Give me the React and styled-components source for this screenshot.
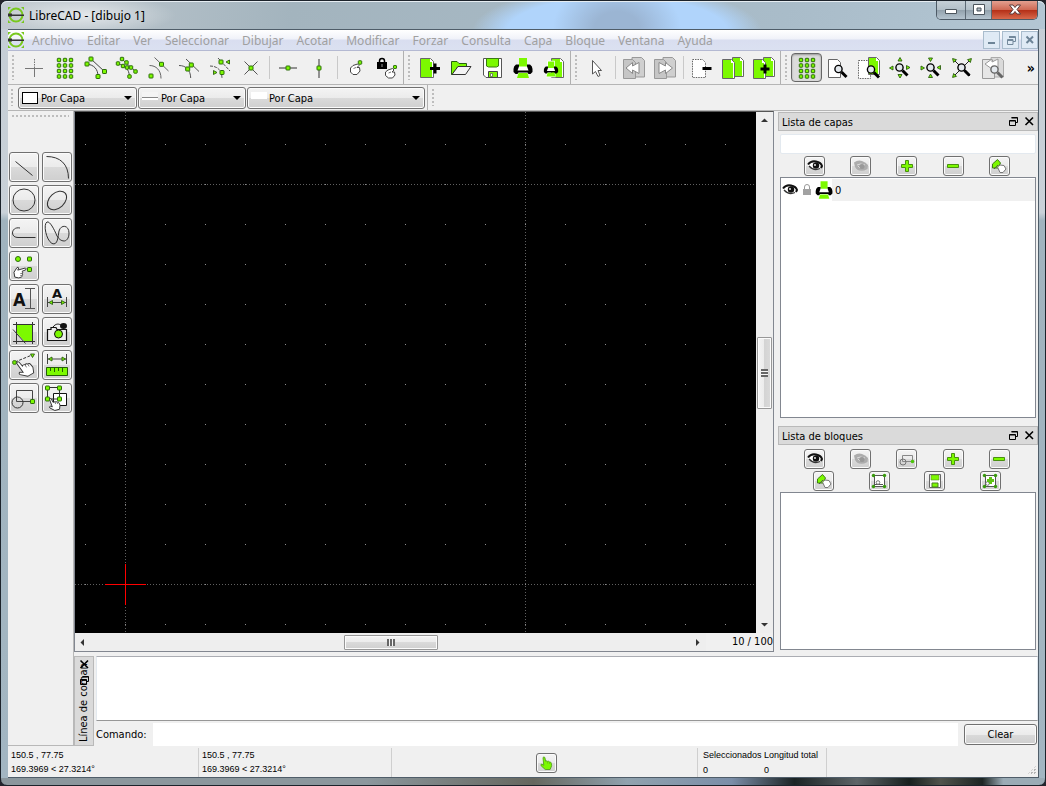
import React from "react";
import styled, { createGlobalStyle, css } from "styled-components";

const GREEN = "#7cf900";
const UI_FONT = `"DejaVu Sans Condensed", "Noto Sans", sans-serif`;

const MENUS = [
  "Archivo",
  "Editar",
  "Ver",
  "Seleccionar",
  "Dibujar",
  "Acotar",
  "Modificar",
  "Forzar",
  "Consulta",
  "Capa",
  "Bloque",
  "Ventana",
  "Ayuda",
];

const TOOLBARS = [
  [
    ["free", "Libre"],
    ["grid", "Rejilla"],
    ["endpoint", "Puntos finales"],
    ["onEntity", "Punto en entidad"],
    ["center", "Centro"],
    ["middle", "Medio"],
    ["distance", "Distancia"],
    ["intersection", "Intersección"],
    null,
    ["horizontal", "Restringir horizontal"],
    ["vertical", "Restringir vertical"],
    null,
    ["relZero", "Mover cero relativo"],
    ["lockZero", "Bloquear cero relativo"],
  ],
  [
    ["newDoc", "Nuevo"],
    ["open", "Abrir"],
    ["save", "Guardar"],
    ["print", "Imprimir"],
    ["preview", "Vista preliminar"],
  ],
  [
    ["cursor", "Seleccionar"],
    null,
    ["undo", "Deshacer"],
    ["redo", "Rehacer"],
    null,
    ["cut", "Cortar"],
    ["copy", "Copiar"],
    ["paste", "Pegar"],
  ],
  [
    ["grid", "Rejilla visible", true],
    ["zoomWindow", "Ventana de zoom"],
    ["zoomPan", "Zoom a página"],
    ["zoomIn", "Acercar"],
    ["zoomOut", "Alejar"],
    ["zoomAuto", "Zoom automático"],
    ["zoomPrev", "Zoom previo"],
  ],
];

const SIDE_TOOLS = [
  ["line", "Líneas"],
  ["arc", "Arcos"],
  ["circle", "Círculos"],
  ["ellipse", "Elipses"],
  ["polyline", "Polilíneas"],
  ["spline", "Splines"],
  ["points", "Puntos"],
  null,
  ["text", "Texto"],
  ["dimension", "Acotar"],
  ["hatch", "Sombreado"],
  ["camera", "Insertar imagen"],
  ["modify", "Modificar"],
  ["measure", "Medir"],
  ["block", "Bloque"],
  ["select", "Seleccionar"],
];

/* ---------- icons ---------- */

const Node = ({ x, y, r = 2 }) => (
  <rect x={x - r} y={y - r} width={r * 2} height={r * 2} rx="0.6" fill={GREEN} stroke="#2c6b0c" />
);

const Tri = ({ x, y, turn = 0 }) => (
  <path
    d="M0 -2L2 1.500H-2Z"
    transform={`translate(${x} ${y}) rotate(${turn})`}
    fill={GREEN}
    stroke="#2d5c14"
    strokeWidth="0.900"
  />
);

const Hand = ({ x, y, scale = 1, turn = 0, fill = "#fff", stroke = "#333" }) => (
  <g transform={`translate(${x} ${y}) rotate(${turn}) scale(${scale})`} stroke={stroke} strokeWidth={0.9 / scale}>
    <path
      d="M-4 -8Q-2.800 -9.500 -1.500 -8L-0.500 -3Q1 -4.200 2.200 -2.800Q3.800 -3.600 4.800 -2Q6.500 -2.500 7 -0.500L7.500 3L5.500 8H-1L-6.500 3Q-7.500 1 -5.500 0.800L-3 2.500Z"
      fill={fill}
    />
    <path d="M2.200 -2.500V0M4.800 -1.500V0.500" strokeWidth={0.6 / scale} />
  </g>
);

const Lens = ({ x, y, color = "#000" }) => (
  <>
    <circle cx={x} cy={y} r="3.600" fill="#e4e9ee" stroke={color} strokeWidth="1.400" />
    <path d={`M${x + 3} ${y + 3}L${x + 8} ${y + 8}`} stroke={color} strokeWidth="3" />
  </>
);

const Page = ({ x, y, w, h, fill = GREEN, dash, stroke = "#666" }) => (
  <>
    <path
      d={`M${x} ${y}H${x + w - 3}L${x + w} ${y + 3}V${y + h}H${x}Z`}
      fill="#fff"
      stroke={stroke}
      strokeDasharray={dash ? "1.500 1" : undefined}
    />
    {!dash && (
      <path d={`M${x + 0.5} ${y + 0.5}H${x + w - 3.5}V${y + 3.5}H${x + w - 1.5}V${y + h - 0.5}H${x + 0.5}Z`} fill={fill} />
    )}
  </>
);

const Plus = ({ x, y, r = 5, fill = "#000", stroke }) => (
  <path
    d={`M${x - 1.5} ${y - r}h3v${r - 1.5}h${r - 1.5}v3h${1.5 - r}v${r - 1.5}h-3v${1.5 - r}h${1.5 - r}v-3h${r - 1.5}z`}
    fill={fill}
    stroke={stroke}
  />
);

const Printer = () => (
  <>
    <path d="M8 2h8v9H8z" fill={GREEN} />
    <path d="M5 8.500h3v3h8v-3h3Q21.500 10 21.500 13V16L19.500 18H17.500L16.500 16.500H7.500L6.500 18H4.500L2.500 16V13Q2.500 10 5 8.500z" fill="#000" />
    <path d="M8 10.500h8L17.500 14.500h-11z" fill="#fff" />
    <path d="M7.500 17h9l1.500 5H6z" fill={GREEN} />
  </>
);

const GRID_X = [6, 12, 18];
const GRID_Y = [4, 9.5, 15, 20.5];

const HistoryPages = () => (
  <>
    <path d="M10 1.500h9.500l3 3V21H10z" fill="#cfcfcf" stroke="#999" />
    <path d="M1.500 3.500h9l3 3V22.500h-12z" fill="#c6c6c6" stroke="#999" />
  </>
);

const ICONS = {
  free: (
    <>
      <path d="M3 12.500H21M12.500 12V21" stroke="#777" />
      <path d="M12.500 3V12" stroke="#777" strokeDasharray="1.500 1" />
    </>
  ),
  grid: GRID_Y.map((y) => GRID_X.map((x) => <Node key={`${x}-${y}`} x={x} y={y} r={1.7} />)),
  endpoint: (
    <>
      <path d="M7 3L20.500 15.500M3 8C10 9 14 13 14 20.500" stroke="#444" />
      <Node x={7} y={3} />
      <Node x={3} y={8} />
      <Node x={20.5} y={15.5} />
      <Node x={14} y={20.5} />
    </>
  ),
  onEntity: (
    <>
      <path d="M7 3L20.500 15.500M3 8C10 9 14 13 14.500 20.500" stroke="#444" />
      {[[7, 3], [3, 7.5], [11.5, 6.5], [8, 10], [12, 11.5], [16, 11.5], [20.5, 15.5], [14.5, 20.5]].map(([x, y]) => (
        <Node key={`${x}-${y}`} x={x} y={y} r={1.7} />
      ))}
    </>
  ),
  center: (
    <>
      <path d="M8.500 1.500L22.500 15M3.500 9.500C10 9.500 15 14 15 22.500" stroke="#666" />
      <Node x={15.5} y={8.3} />
      <Node x={5} y={20} />
    </>
  ),
  middle: (
    <>
      <path d="M9 3L22 15.500M2 9.500C9 9.500 13.500 14 13.700 22" stroke="#555" />
      <Node x={14.3} y={9} />
      <Node x={10.7} y={13} />
    </>
  ),
  distance: (
    <>
      <path d="M10 2L22 15M2 10C9 10 14 14 14 22" stroke="#555" strokeDasharray="3 1" />
      <Node x={13} y={6} />
      <Node x={14} y={16.5} />
      <Tri x={20} y={6} turn={-90} />
      <Tri x={7} y={16.5} turn={90} />
    </>
  ),
  intersection: (
    <>
      <path d="M5.500 5.500L18.500 18.500M18.500 5.500L5.500 18.500" stroke="#555" />
      <Node x={12} y={12} />
    </>
  ),
  horizontal: (
    <>
      <path d="M3 12H21" stroke="#333" />
      <Node x={12} y={12} />
    </>
  ),
  vertical: (
    <>
      <path d="M12 3V22" stroke="#333" />
      <Node x={12} y={12} />
    </>
  ),
  relZero: (
    <>
      <path d="M6.500 12L9 9.500L13.500 8L15 9.500L13 11.500H15.500L16 15L13 18.500H9L6.500 16z" fill="#fff" stroke="#444" />
      <path d="M9.500 12.500L12 11.500" stroke="#777" />
      <Node x={16} y={6.5} r={1.7} />
    </>
  ),
  lockZero: (
    <>
      <path d="M4.500 7V5Q4.500 2.500 7 2.500T9.500 5V7" stroke="#000" strokeWidth="1.500" />
      <path d="M2 6h10v7H2z" fill="#000" />
      <path d="M7 8v3" stroke="#999" />
      <path d="M10.500 16L13 14L17.500 12.500L19 14L17 16H19.500L20 19L17.500 22H13.500L10.500 19.500z" fill="#fff" stroke="#444" />
      <path d="M13.500 17L16 16" stroke="#777" />
      <Node x={20} y={11} r={1.5} />
    </>
  ),
  newDoc: (
    <>
      <Page x={2.5} y={2.5} w={13} h={19} />
      <Plus x={17} y={12.5} r={5} />
    </>
  ),
  open: (
    <>
      <path d="M2.500 18.500V5.500H8L10 7.500H17.500V10.500H9L3 18.500z" fill={GREEN} stroke="#276010" />
      <path d="M3 18.500L9 10.500H22L16.500 18.500z" fill="#f4f4f4" stroke="#333" />
    </>
  ),
  save: (
    <>
      <path d="M3.500 2.500H21.500V21.500H6L3.500 19z" fill="#fff" stroke="#555" />
      <path d="M6.500 2.500h12V10l-2 1h-8l-2-1z" fill={GREEN} stroke="#3a7a12" />
      <path d="M8.500 15.500h9v6h-9z" fill={GREEN} stroke="#444" />
      <path d="M10.500 17.500h2v3h-2z" fill="#fff" stroke="#555" strokeWidth="0.700" />
    </>
  ),
  print: <Printer />,
  preview: (
    <>
      <Page x={9.5} y={2.5} w={12} h={19} />
      <g transform="translate(0 4) scale(.75)">
        <path d="M7 1h10v8H7zM6 18h12v5H5z" fill="#fff" />
        <Printer />
      </g>
    </>
  ),
  cursor: <path d="M7.500 4.500V18L10.500 15.500L13 20.500L15 19.500L13 14.500H16.500z" fill="#fff" stroke="#555" />,
  undo: (
    <>
      <HistoryPages />
      <path d="M10.500 6.500L4 12L10.500 17.500V14L17 17.500V6.500L10.500 10z" fill="#fff" stroke="#888" />
    </>
  ),
  redo: (
    <>
      <HistoryPages />
      <path d="M12.500 6.500L19.500 12L12.500 17.500V14L6 17.500V6.500L12.500 10z" fill="#fff" stroke="#888" />
    </>
  ),
  cut: (
    <>
      <Page x={2.5} y={3.5} w={13} h={18} dash />
      <path d="M12.500 11h9v3h-9z" fill="#000" />
    </>
  ),
  copy: (
    <>
      <Page x={11.5} y={1.5} w={11} h={19} />
      <Page x={1.5} y={3.5} w={12} h={19} />
    </>
  ),
  paste: (
    <>
      <Page x={11.5} y={1.5} w={11} h={19} />
      <Page x={1.5} y={3.5} w={12} h={19} />
      <Plus x={13} y={13} r={4.5} />
    </>
  ),
  zoomWindow: (
    <>
      <Page x={2.5} y={3.5} w={12} h={18} fill="#fff" />
      <Lens x={12.5} y={13} />
    </>
  ),
  zoomPan: (
    <>
      <Page x={1.5} y={4.5} w={12} h={18} dash />
      <Page x={11.5} y={1.5} w={11} h={17} />
      <Lens x={14} y={13.5} />
    </>
  ),
  zoomIn: (
    <>
      <Lens x={11.5} y={11.5} />
      <Tri x={12} y={3.5} />
      <Tri x={3.5} y={12} turn={-90} />
      <Tri x={20} y={11.5} turn={90} />
      <Tri x={12} y={20} turn={180} />
    </>
  ),
  zoomOut: (
    <>
      <Lens x={11.5} y={11.5} />
      <Tri x={11.5} y={3.5} turn={180} />
      <Tri x={3.5} y={12} turn={90} />
      <Tri x={20} y={11.5} turn={-90} />
      <Tri x={11.5} y={20} />
    </>
  ),
  zoomAuto: (
    <>
      <path d="M4 4L20 20M20 4L4 20" stroke="#222" />
      <Lens x={11.5} y={11.5} />
      <Tri x={4} y={4} turn={-45} />
      <Tri x={20} y={4} turn={45} />
      <Tri x={4} y={20} turn={225} />
    </>
  ),
  zoomPrev: (
    <>
      <path d="M10 1.500h9.500l3 3V21H10z" fill="#dadada" stroke="#aaa" />
      <path d="M1.500 3.500h9l3 3V22.500h-12z" fill="#e6e6e6" stroke="#999" />
      <path d="M11 3L4 8L11 13V10L17 13V3L11 6z" fill="#fff" stroke="#999" />
      <Lens x={13.5} y={13.5} color="#666" />
    </>
  ),
  line: <path d="M3.500 6.500L20.500 20.500" stroke="#333" />,
  arc: <path d="M1.500 1.500C15 1.500 23.500 9 23.500 23.500" stroke="#333" />,
  circle: <circle cx="12" cy="12" r="11" stroke="#333" />,
  ellipse: <ellipse cx="12" cy="12.500" rx="11" ry="7.500" transform="rotate(-42 12 12.500)" stroke="#333" />,
  polyline: <path d="M8 7C3 6 0.500 9 0.500 12C0.500 15 3 16.500 6 16.500H23.500" stroke="#333" />,
  spline: (
    <path
      d="M12 15C9 8 5 0 2 1C-2 3 1 19 7 22.500C13 25 13 15 14 10C16 3 24 4 24 12C24 18 21 20 19 20C16 20 14 18 12 15z"
      stroke="#333"
    />
  ),
  points: (
    <>
      <circle cx="6" cy="5" r="2.500" fill={GREEN} stroke="#2c6b0c" />
      <Node x={17.5} y={5} />
      <Node x={17.5} y={15.5} />
      <Hand x={8} y={18} scale={0.75} turn={80} />
    </>
  ),
  text: (
    <>
      <text x="1" y="19" fontSize="18" fontWeight="bold" fontFamily="DejaVu Sans Condensed, sans-serif" fill="#111">
        A
      </text>
      <path d="M13 1.500H23M13 21.500H23M18.500 2V21" stroke="#555" />
    </>
  ),
  dimension: (
    <>
      <text x="7" y="11" fontSize="13" fontWeight="bold" fontFamily="DejaVu Sans, sans-serif" fill="#111">
        A
      </text>
      <path d="M2.500 10V20M21.500 10V20M3 15.500H21" stroke="#444" />
      <Tri x={6} y={15.5} turn={-90} />
      <Tri x={18} y={15.5} turn={90} />
    </>
  ),
  hatch: (
    <>
      <path d="M4 4H21V22H13L4 12z" fill={GREEN} />
      <path d="M1 4.500H23M20.500 2V24M4.500 2V24M1 21.500H23M1 9.500L13.500 23.500" stroke="#333" />
    </>
  ),
  camera: (
    <>
      <path d="M2.500 9.500H6V7.500H11L12 9.500H21.500V20.500H2.500z" fill="#eee" stroke="#111" strokeWidth="1.200" />
      <path d="M8 7C11 3 14 4 16 5" stroke="#111" />
      <ellipse cx="18.500" cy="6" rx="3.500" ry="3" fill="#111" />
      <circle cx="13.500" cy="14" r="4" fill={GREEN} stroke="#111" />
    </>
  ),
  modify: (
    <>
      <path d="M3 9L20 2" stroke="#333" strokeDasharray="3 1.500" />
      <Node x={2.5} y={9.5} r={1.7} />
      <Tri x={20.5} y={2.5} turn={180} />
      <Hand x={12.5} y={15.5} scale={1.05} turn={-30} />
    </>
  ),
  measure: (
    <>
      <path d="M2.500 1V11M21.500 1V11M3 6H21" stroke="#444" />
      <Tri x={5.5} y={6} turn={-90} />
      <Tri x={18.5} y={6} turn={90} />
      <path d="M1.500 14.500H22.500V22.500H1.500z" fill={GREEN} stroke="#245c0a" />
      <path d="M5.500 15V18M9.500 15V19M13.500 15V18M17.500 15V19" stroke="#245c0a" />
    </>
  ),
  block: (
    <>
      <path d="M4.500 4.500H20.500V15.500H4.500z" stroke="#444" />
      <circle cx="5.500" cy="16.500" r="5.500" stroke="#333" />
      <Node x={20.5} y={15.5} />
    </>
  ),
  select: (
    <>
      <path d="M8.500 7.500H21.500V19.500H8.500z" fill="#fff" stroke="#111" />
      <path d="M2.500 1.500H14.500V13H2.500z" stroke="#333" />
      <Node x={2.5} y={2} />
      <Node x={14.5} y={2} />
      <Node x={2.5} y={13} />
      <Node x={14.5} y={13} />
      <Hand x={9} y={18.5} scale={0.75} turn={-15} />
    </>
  ),
  eye: (
    <>
      <path d="M1 7Q6 3 14 6L13 9.500Q7 13 1 8z" fill="#fff" />
      <path d="M1 6.500Q4 2.500 9 3.500T15 8L14 10" stroke="#111" strokeWidth="2" />
      <path d="M2 8Q7 13.500 13 10.500" stroke="#333" strokeWidth="1.200" />
      <circle cx="9" cy="7.500" r="3.200" fill="#111" />
      <circle cx="8" cy="7" r="0.900" fill="#fff" />
    </>
  ),
  eyeOff: (
    <>
      <path d="M1 4.500Q5 1.500 9 3T15 7L14.500 11Q6 15.500 2 9z" fill="#adadad" />
      <path d="M4 7Q7 5 12 7M5 8L7 10" stroke="#ddd" />
      <circle cx="9" cy="8.500" r="2.500" fill="#999" />
    </>
  ),
  add: <Plus x={8} y={8} r={5.5} fill={GREEN} stroke="#49910f" />,
  remove: <path d="M2.500 6.500H13.500V9.500H2.500z" fill={GREEN} stroke="#49910f" />,
  edit: (
    <>
      <path d="M1.500 10V6L6.500 1.500L9.500 5L7 10z" fill={GREEN} stroke="#3c7f12" />
      <path d="M3 11L7 7" stroke="#555" />
      <path d="M6.500 9L9 7L13 7.500L15 11L12 14.500H9z" fill="#fff" stroke="#777" />
    </>
  ),
  blockSmall: (
    <>
      <path d="M3.500 4.500H13.500V10.500H3.500z" stroke="#888" />
      <circle cx="4" cy="11" r="3" stroke="#777" />
      <circle cx="13.500" cy="10.500" r="1.800" fill="#4cc40a" />
    </>
  ),
  frame: (
    <>
      <path d="M3.500 2.500H13.500V13.500H3.500zM4 11.500H12" fill="#fff" stroke="#555" />
      <circle cx="7" cy="9.500" r="1.800" stroke="#777" />
      {[2.5, 13.5].map((x) => [2.5, 13.5].map((y) => <circle key={`${x}${y}`} cx={x} cy={y} r="1.700" fill="#389a0c" />))}
    </>
  ),
  frameAdd: (
    <>
      <path d="M3.500 2.500H13.500V13.500H3.500z" fill="#fff" stroke="#555" />
      <circle cx="5.500" cy="10.500" r="1.800" stroke="#777" />
      <path d="M8.500 4V11M5 7.500H12" stroke="#5fc414" strokeWidth="3" />
      {[2.5, 13.5].map((x) => [2.5, 13.5].map((y) => <circle key={`${x}${y}`} cx={x} cy={y} r="1.700" fill="#389a0c" />))}
    </>
  ),
  saveSmall: (
    <>
      <path d="M2.500 1.500H13.500V14.500H2.500z" fill="#fff" stroke="#666" />
      <path d="M4 2h8v5H4z" fill={GREEN} stroke="#5a8a30" strokeWidth="0.600" />
      <path d="M5 10h6v4H5z" fill={GREEN} stroke="#4a8020" />
    </>
  ),
  lock: (
    <>
      <path d="M5.500 7V5Q5.500 2.500 8 2.500T10.500 5V7" stroke="#999" />
      <path d="M4 7h8v6H4z" fill="#a2a2a2" />
    </>
  ),
  printSmall: (
    <g transform="translate(-2.500 -2.500) scale(.88)">
      <Printer />
    </g>
  ),
  point: <Hand x={8} y={8.5} scale={0.75} fill={GREEN} stroke="#55a01c" />,
  restore: <path d="M3.500 1.500H9.500V6.500H7M1.500 4.500H7.500V9.500H1.500zM3.500 2H9.500M1.500 5H7.500" stroke="#000" />,
  close: <path d="M1.500 1.500L9 9M9 1.500L1.500 9" stroke="#000" strokeWidth="1.600" />,
  mdiMin: <path d="M2 9h7" stroke="#6d8497" strokeWidth="2" />,
  mdiRestore: <path d="M4 2.500H10.500V7.500H8M2.500 5.500H8V10.500H2.500zM4 3.500H10M2.500 6.500H8" stroke="#74899c" />,
  mdiClose: <path d="M2.500 2.500L9 9M9 2.500L2.500 9" stroke="#6d8497" strokeWidth="2" />,
  winMin: <path d="M0.500 5.500H11.500V9.500H0.500z" fill="#fff" stroke="#4c555d" />,
  winMax: <path d="M0.500 0.500H11.500V10.500H0.500zM4 4H8V7H4z" fill="#fff" fillRule="evenodd" stroke="#4c555d" />,
  winClose: (
    <path d="M0.500 1H4L6 3.500L8 1H11.500L8 5.500L11.500 10H8L6 7.500L4 10H0.500L4 5.500z" fill="#fff" stroke="#5a3a3a" />
  ),
  logo: (
    <>
      <circle cx="8" cy="8" r="6.500" stroke="#78c81e" strokeWidth="2" />
      <path d="M0 0H3L0 3zM16 0V3L13 0zM0 16V13L3 16zM16 16H13L16 13z" fill="#78c81e" />
      <path d="M0 6.500H4V9.500H0zM4 7.500H16V9H4z" fill="#333" />
    </>
  ),
  left: <path d="M6 2L2.500 5.500L6 9z" fill="#333" />,
  right: <path d="M4 2L7.500 5.500L4 9z" fill="#333" />,
  up: <path d="M2 7L5.500 3.500L9 7z" fill="#333" />,
  down: <path d="M2 4L5.500 7.500L9 4z" fill="#333" />,
};

const Icon = ({ name, size = 24 }) => (
  <Svg width={size} height={size} viewBox={`0 0 ${size} ${size}`} fill="none" aria-hidden="true">
    {ICONS[name]}
  </Svg>
);

/* ---------- parts ---------- */

const Dock = ({ title, grow, children }) => (
  <DockPanel $grow={grow}>
    <DockTitle>
      <DockName>{title}</DockName>
      <PlainButton aria-label="Restaurar">
        <Icon name="restore" size={11} />
      </PlainButton>
      <PlainButton aria-label="Cerrar">
        <Icon name="close" size={11} />
      </PlainButton>
    </DockTitle>
    {children}
  </DockPanel>
);

const DockTools = ({ tools }) => (
  <DockRow>
    {tools.map(([icon, label]) => (
      <SmallButton key={icon} aria-label={label}>
        <Icon name={icon} size={16} />
      </SmallButton>
    ))}
  </DockRow>
);

const Combo = ({ label, width, indent, swatch }) => (
  <ComboBox $width={width}>
    <Swatch $kind={swatch} />
    <ComboSelect aria-label={label} $indent={indent}>
      <option>Por Capa</option>
    </ComboSelect>
    <ComboArrow />
  </ComboBox>
);

const Drawing = () => (
  <CanvasSvg aria-label="dibujo 1">
    <defs>
      <pattern id="dots" x="10" y="32" width="40" height="40" patternUnits="userSpaceOnUse">
        <rect width="1" height="1" fill="#8c8c8c" />
      </pattern>
      <pattern id="rows" x="0" y="72" width="3" height="400" patternUnits="userSpaceOnUse">
        <rect width="1" height="1" fill="#606060" />
      </pattern>
      <pattern id="cols" x="50" y="0" width="400" height="3" patternUnits="userSpaceOnUse">
        <rect width="1" height="1" fill="#606060" />
      </pattern>
    </defs>
    <rect width="100%" height="100%" fill="#000" />
    <rect width="100%" height="100%" fill="url(#rows)" />
    <rect width="100%" height="100%" fill="url(#cols)" />
    <rect width="100%" height="100%" fill="url(#dots)" />
    <path d="M30 472.500H71M50.500 452V493" stroke="#f00" />
  </CanvasSvg>
);

export default function App() {
  return (
    <>
      <GlobalStyle />
      <Window>
        <TitleBar>
          <Icon name="logo" size={16} />
          <Title>LibreCAD - [dibujo 1]</Title>
          <WindowButtons>
            <WindowButton $width={28} aria-label="Minimizar">
              <Icon name="winMin" size={12} />
            </WindowButton>
            <WindowButton $width={26} aria-label="Maximizar">
              <Icon name="winMax" size={12} />
            </WindowButton>
            <WindowButton $width={46} $close aria-label="Cerrar">
              <Icon name="winClose" size={12} />
            </WindowButton>
          </WindowButtons>
        </TitleBar>

        <Client>
          <MenuBar>
            <Icon name="logo" size={16} />
            <MenuItems>
              {MENUS.map((name) => (
                <MenuItem key={name}>{name}</MenuItem>
              ))}
            </MenuItems>
            <MdiButton aria-label="Minimizar dibujo">
              <Icon name="mdiMin" size={12} />
            </MdiButton>
            <MdiButton aria-label="Restaurar dibujo">
              <Icon name="mdiRestore" size={12} />
            </MdiButton>
            <MdiButton aria-label="Cerrar dibujo">
              <Icon name="mdiClose" size={12} />
            </MdiButton>
          </MenuBar>

          <ToolBar>
            {TOOLBARS.map((group, i) => (
              <ToolGroup key={i}>
                <Handle />
                {group.map((tool, j) =>
                  tool ? (
                    <ToolButton key={j} aria-label={tool[1]} $pressed={tool[2]}>
                      <Icon name={tool[0]} />
                    </ToolButton>
                  ) : (
                    <Separator key={j} />
                  )
                )}
              </ToolGroup>
            ))}
            <MoreButton aria-label="Más herramientas">»</MoreButton>
          </ToolBar>

          <PenBar>
            <Handle />
            <Combo label="Color" width={119} indent={22} swatch="color" />
            <Combo label="Ancho" width={108} indent={22} swatch="line" />
            <Combo label="Tipo de línea" width={178} indent={21} swatch="blank" />
            <PenEnd>
              <Handle />
            </PenEnd>
          </PenBar>

          <Body>
            <SideBar>
              <SideHandle />
              <SideGrid>
                {SIDE_TOOLS.map((tool, i) =>
                  tool ? (
                    <SideButton key={i} aria-label={tool[1]}>
                      <Icon name={tool[0]} />
                    </SideButton>
                  ) : (
                    <span key={i} />
                  )
                )}
              </SideGrid>
            </SideBar>

            <Main>
              <Workspace>
                <View>
                  <CanvasCell>
                    <Drawing />
                  </CanvasCell>
                  <ScrollTrack $vertical>
                    <Icon name="up" size={11} />
                    <ScrollSpace $grow={209} />
                    <Thumb $vertical />
                    <ScrollSpace $grow={209} />
                    <Icon name="down" size={11} />
                  </ScrollTrack>
                  <ViewFoot>
                    <ScrollTrack>
                      <Icon name="left" size={11} />
                      <ScrollSpace $grow={254} />
                      <Thumb />
                      <ScrollSpace $grow={254} />
                      <Icon name="right" size={11} />
                    </ScrollTrack>
                    <GridInfo>10 / 100</GridInfo>
                  </ViewFoot>
                </View>

                <Docks>
                  <Dock title="Lista de capas" grow={307}>
                    <Filter aria-label="Filtro de capas" />
                    <DockTools
                      tools={[
                        ["eye", "Mostrar todas las capas"],
                        ["eyeOff", "Ocultar todas las capas"],
                        ["add", "Añadir capa"],
                        ["remove", "Eliminar capa"],
                        ["edit", "Modificar capa"],
                      ]}
                    />
                    <List>
                      <Layer>
                        <LayerIcons>
                          <Icon name="eye" size={16} />
                          <Icon name="lock" size={16} />
                          <Icon name="printSmall" size={16} />
                        </LayerIcons>
                        <LayerName>0</LayerName>
                      </Layer>
                    </List>
                  </Dock>
                  <Dock title="Lista de bloques" grow={225}>
                    <DockSpacer />
                    <DockTools
                      tools={[
                        ["eye", "Mostrar todos los bloques"],
                        ["eyeOff", "Ocultar todos los bloques"],
                        ["blockSmall", "Crear bloque"],
                        ["add", "Añadir bloque"],
                        ["remove", "Eliminar bloque"],
                      ]}
                    />
                    <DockTools
                      tools={[
                        ["edit", "Renombrar bloque"],
                        ["frame", "Editar bloque"],
                        ["saveSmall", "Guardar bloque"],
                        ["frameAdd", "Insertar bloque"],
                      ]}
                    />
                    <List />
                  </Dock>
                </Docks>
              </Workspace>

              <Command>
                <CommandTab>
                  <TabText>Línea de coman</TabText>
                  <TabButtons>
                    <PlainButton aria-label="Cerrar línea de comandos">
                      <Icon name="close" size={11} />
                    </PlainButton>
                    <PlainButton aria-label="Restaurar línea de comandos">
                      <Icon name="restore" size={11} />
                    </PlainButton>
                  </TabButtons>
                </CommandTab>
                <CommandMain>
                  <History readOnly aria-label="Historial" />
                  <CommandRow>
                    <label htmlFor="comando">Comando:</label>
                    <CommandInput id="comando" />
                    <ClearButton>Clear</ClearButton>
                  </CommandRow>
                </CommandMain>
              </Command>
            </Main>
          </Body>

          <StatusBar>
            <StatusCell>
              <span>150.5 , 77.75</span>
              <span>169.3969 &lt; 27.3214°</span>
            </StatusCell>
            <StatusCell>
              <span>150.5 , 77.75</span>
              <span>169.3969 &lt; 27.3214°</span>
            </StatusCell>
            <StatusCell $center>
              <SmallButton aria-label="Ratón">
                <Icon name="point" size={16} />
              </SmallButton>
            </StatusCell>
            <StatusCell $pair>
              <span>Seleccionados</span>
              <span>Longitud total</span>
              <span>0</span>
              <span>0</span>
            </StatusCell>
            <Grip />
          </StatusBar>
        </Client>
      </Window>
    </>
  );
}

/* ---------- styles ---------- */

const GlobalStyle = createGlobalStyle`
  * {
    box-sizing: border-box;
  }
  body {
    margin: 0;
    background: #24242c;
    font: 11px ${UI_FONT};
    color: #000;
  }
  button, input, select, textarea {
    font: inherit;
    color: inherit;
    padding: 0;
    margin: 0;
    border: 0;
    border-radius: 0;
    outline: none;
  }
`;

const Svg = styled.svg`
  display: block;
  flex: none;
  overflow: visible;
`;

const bevel = css`
  border: 1px solid #707070;
  border-radius: 3px;
  background: linear-gradient(#f4f4f4, #ebebeb 50%, #dadada 50%, #cfcfcf);
  box-shadow: inset 0 0 0 1px #fbfbfb;
`;

const centered = css`
  display: flex;
  align-items: center;
  justify-content: center;
`;

const Window = styled.div`
  display: flex;
  flex-direction: column;
  min-height: 100vh;
  padding: 0 6px 7px 7px;
  border: 1px solid #1c232b;
  border-radius: 7px;
  background: linear-gradient(
        90deg,
        #8b979d,
        #8b979d 35%,
        #66675f 51%,
        #90a2ae 60%,
        #7b8ea8 70%,
        #1b2324 76%,
        #5d6568 82%,
        #17201e 87%,
        #50534c 90%,
        #1c2523 94%,
        #9aabb5 96%
      )
      bottom / 100% 7px no-repeat,
    linear-gradient(#c4cdd5, #c9d1d8 27%, #a0b3be 28%, #a3b6c2);
`;

const TitleBar = styled.header`
  display: flex;
  align-items: center;
  gap: 5px;
  height: 28px;
  margin: 0 -6px 0 -7px;
  padding-left: 7px;
  border-radius: 6px 6px 0 0;
  box-shadow: inset 0 1px 0 #e6edf2;
  background: radial-gradient(90px 20px at 85px 50%, rgba(255, 255, 255, 0.6), transparent),
    radial-gradient(64px 50px at 59% 100%, #9bb5d3 35%, transparent),
    radial-gradient(145px 46px at 59% 110%, #b0d4fb 76%, transparent),
    linear-gradient(100deg, #c2cad0, #a3b4be 28%, #a9bcc9 75%, #b3c6d3);
`;

const Title = styled.h1`
  flex: 1;
  margin: 0;
  font: 12px "Noto Sans", sans-serif;
`;

const WindowButtons = styled.div`
  display: flex;
  align-self: flex-start;
  margin-right: 7px;
  border: 1px solid #4d5a66;
  border-top: 0;
  border-radius: 0 0 5px 5px;
  overflow: hidden;
`;

const WindowButton = styled.button`
  ${centered}
  width: ${(props) => props.$width}px;
  height: 18px;
  border-left: 1px solid #5c6974;
  background: ${(props) =>
    props.$close
      ? "linear-gradient(#e3a090, #cf6a55 48%, #b53018 52%, #d8694c)"
      : "linear-gradient(#c6d0d7, #b2bfc8 48%, #93a2ad 52%, #b4c3ce)"};
  &:first-child {
    border-left: 0;
  }
`;

const Client = styled.div`
  display: flex;
  flex: 1;
  flex-direction: column;
  border: 1px solid #4f5d69;
  border-left-width: 0;
  background: #f0f0f0;
`;

const MenuBar = styled.nav`
  display: flex;
  align-items: center;
  gap: 2px;
  height: 21px;
  border-bottom: 1px solid #b4b9d2;
  background: linear-gradient(#fff, #f0f2f9 45%, #d9def0 50%, #dbe1f1);
`;

const MenuItems = styled.div`
  display: flex;
  flex: 1;
  gap: 13px;
  padding-left: 6px;
`;

const MenuItem = styled.button`
  background: none;
  color: #a0a0a0;
  font: 12px "Noto Sans", sans-serif;
`;

const MdiButton = styled.button`
  ${centered}
  width: 17px;
  height: 18px;
  border: 1px solid #a9bccd;
  background: #dfeaf5;
`;

const ToolBar = styled.div`
  display: flex;
  height: 34px;
  border-bottom: 1px solid #b5b5b5;
`;

const ToolGroup = styled.div`
  display: flex;
  align-items: center;
  padding: 0 1px 0 4px;
  border-right: 1px solid #b0b0b0;
  &:nth-last-child(2) {
    border-right: 0;
  }
`;

const Handle = styled.span`
  width: 2px;
  align-self: stretch;
  margin: 4px 4px 4px 0;
  background: repeating-linear-gradient(#bdbdbd 0 2px, transparent 2px 4px);
`;

const ToolButton = styled.button`
  ${centered}
  width: 31px;
  height: 29px;
  border-radius: 4px;
  background: none;
  ${(props) =>
    props.$pressed &&
    css`
      border: 1px solid #666;
      background: #dcdcdc;
      box-shadow: inset 0 1px 2px #999;
    `}
`;

const Separator = styled.span`
  width: 1px;
  height: 23px;
  margin: 0 2px 0 3px;
  background: #c9c9c9;
`;

const MoreButton = styled.button`
  margin-left: auto;
  padding: 0 3px;
  background: none;
  font: bold 14px "DejaVu Sans Condensed", sans-serif;
`;

const PenBar = styled.div`
  display: flex;
  align-items: center;
  gap: 1px;
  height: 26px;
  padding-left: 3px;
  border-bottom: 1px solid #b5b5b5;
`;

const PenEnd = styled.div`
  display: flex;
  align-self: stretch;
  margin-left: 1px;
  padding-left: 4px;
  border-left: 1px solid #b0b0b0;
`;

const ComboBox = styled.div`
  position: relative;
  width: ${(props) => props.$width}px;
`;

const ComboSelect = styled.select`
  ${bevel}
  appearance: none;
  display: block;
  width: 100%;
  height: 22px;
  padding: 1px 0 0 ${(props) => props.$indent}px;
`;

const Swatch = styled.span`
  position: absolute;
  left: 4px;
  top: 5px;
  width: 16px;
  height: 12px;
  pointer-events: none;
  ${(props) => props.$kind === "color" && "border: 1px solid #000; background: #fff;"}
  ${(props) =>
    props.$kind === "line" && "background: linear-gradient(#f4f4f4 5px, #888 5px 6px, #fff 6px 8px, transparent 8px);"}
  ${(props) => props.$kind === "blank" && "height: 7px; background: #fff;"}
`;

const ComboArrow = styled.span`
  position: absolute;
  right: 5px;
  top: 9px;
  border: 4px solid transparent;
  border-top-color: #000;
  border-bottom: 0;
  pointer-events: none;
`;

const Body = styled.div`
  display: flex;
  flex: 1;
`;

const SideBar = styled.aside`
  flex: none;
  width: 66px;
  padding: 4px 1px;
  border-right: 1px solid #b8b8b8;
  border-bottom: 1px solid #b8b8b8;
`;

const SideHandle = styled.div`
  height: 2px;
  margin: 0 3px 35px;
  background: repeating-linear-gradient(90deg, #bdbdbd 0 2px, transparent 2px 4px);
`;

const SideGrid = styled.div`
  display: grid;
  grid-template-columns: 30px 30px;
  grid-auto-rows: 30px;
  gap: 3px;
`;

const SideButton = styled.button`
  ${bevel}
  ${centered}
`;

const Main = styled.main`
  display: flex;
  flex: 1;
  flex-direction: column;
  min-width: 0;
`;

const Workspace = styled.div`
  display: flex;
  flex: 1;
  gap: 4px;
`;

const View = styled.section`
  display: grid;
  flex: 1;
  grid-template: 1fr 18px / 1fr 17px;
  min-width: 0;
  border: 1px solid #828790;
  border-top-color: #555;
`;

const CanvasCell = styled.div`
  position: relative;
  min-height: 300px;
`;

const CanvasSvg = styled.svg`
  position: absolute;
  inset: 0;
  width: 100%;
  height: 100%;
  shape-rendering: crispEdges;
`;

const ScrollTrack = styled.div`
  display: flex;
  flex: 1;
  flex-direction: ${(props) => (props.$vertical ? "column" : "row")};
  align-items: center;
  padding: ${(props) => (props.$vertical ? "3px 0" : "0 3px")};
  background: #eeeeee;
`;

const ScrollSpace = styled.span`
  flex: ${(props) => props.$grow} 0 0;
`;

const Thumb = styled.div`
  ${bevel}
  ${centered}
  width: 94px;
  height: 15px;
  border-color: #979797;
  border-radius: 1px;
  &::after {
    content: "";
    width: 8px;
    height: 7px;
    background: repeating-linear-gradient(90deg, #666 0 2px, #f5f5f5 2px 3px);
  }
  ${(props) =>
    props.$vertical &&
    css`
      width: 15px;
      height: 72px;
      background: linear-gradient(90deg, #f4f4f4, #ebebeb 50%, #d4d4d4 50%, #dadada);
      &::after {
        width: 7px;
        height: 8px;
        background: repeating-linear-gradient(#666 0 2px, #f5f5f5 2px 3px);
      }
    `}
`;

const ViewFoot = styled.div`
  display: flex;
  grid-column: 1 / -1;
`;

const GridInfo = styled.span`
  width: 67px;
  line-height: 17px;
  text-align: right;
`;

const Docks = styled.aside`
  display: flex;
  flex: none;
  flex-direction: column;
  gap: 8px;
  width: 260px;
  padding: 1px 0 2px;
`;

const DockPanel = styled.section`
  display: flex;
  flex: ${(props) => props.$grow} 0 0;
  flex-direction: column;
`;

const DockTitle = styled.div`
  display: flex;
  align-items: center;
  gap: 5px;
  height: 19px;
  padding: 0 2px 0 3px;
  border: 1px solid #b9b9b9;
  background: #dadada;
`;

const DockName = styled.h2`
  flex: 1;
  margin: 0;
  padding-top: 2px;
  font-size: 11px;
  font-weight: normal;
`;

const PlainButton = styled.button`
  background: none;
`;

const DockSpacer = styled.div`
  height: 3px;
`;

const Filter = styled.input`
  height: 20px;
  margin: 3px 2px 1px;
  border: 1px solid #e3e9ef;
  border-radius: 2px;
  background: #fff;
`;

const DockRow = styled.div`
  display: flex;
  align-items: center;
  justify-content: space-evenly;
  height: 22px;
  margin: 0 3px 0 1px;
`;

const SmallButton = styled.button`
  ${bevel}
  ${centered}
  width: 21px;
  height: 20px;
`;

const List = styled.ul`
  flex: 1;
  margin: 0 2px;
  padding: 1px 0;
  border: 1px solid #828790;
  background: #fff;
  list-style: none;
`;

const Layer = styled.li`
  display: flex;
  align-items: center;
  height: 22px;
  background: #f0f0f0;
`;

const LayerIcons = styled.span`
  display: flex;
  align-items: center;
  gap: 1px;
  height: 100%;
  padding-left: 1px;
  background: #fff;
`;

const LayerName = styled.span`
  padding-left: 3px;
`;

const Command = styled.section`
  display: flex;
  gap: 2px;
  height: 90px;
  margin-top: 4px;
`;

const CommandTab = styled.div`
  position: relative;
  width: 20px;
  border: 1px solid #b9b9b9;
  background: #dadada;
`;

const TabText = styled.span`
  display: block;
  height: 100%;
  padding-top: 3px;
  line-height: 18px;
  white-space: nowrap;
  writing-mode: vertical-rl;
  transform: rotate(180deg);
`;

const TabButtons = styled.div`
  position: absolute;
  top: 2px;
  left: 4px;
  display: flex;
  flex-direction: column;
  gap: 5px;
`;

const CommandMain = styled.div`
  display: flex;
  flex: 1;
  flex-direction: column;
  min-width: 0;
`;

const History = styled.textarea`
  flex: 1;
  border: 1px solid #e3e9ef;
  border-top-color: #abadb3;
  border-bottom-color: #979797;
  background: #fff;
  resize: none;
`;

const CommandRow = styled.div`
  display: flex;
  align-items: center;
  gap: 6px;
  height: 25px;
  padding: 2px 1px 0 0;
`;

const CommandInput = styled.input`
  flex: 1;
  align-self: stretch;
  min-width: 0;
  background: #fff;
`;

const ClearButton = styled.button`
  ${bevel}
  width: 73px;
  height: 21px;
`;

const StatusBar = styled.footer`
  display: grid;
  grid-template-columns: 191fr 193fr 306fr 129fr 211fr;
  height: 31px;
  padding-top: 2px;
  font: 9px/14px "Liberation Sans", sans-serif;
`;

const StatusCell = styled.div`
  display: flex;
  flex-direction: column;
  padding-left: 3px;
  border-right: 1px solid #cfcfcf;
  white-space: nowrap;
  ${(props) =>
    props.$center &&
    css`
      align-items: center;
      justify-content: center;
    `}
  ${(props) =>
    props.$pair &&
    css`
      display: grid;
      grid-template-columns: 61px 1fr;
      padding-left: 5px;
    `}
`;

const Grip = styled.span`
  align-self: end;
  justify-self: end;
  width: 9px;
  height: 9px;
  margin: 2px;
  clip-path: polygon(100% 0, 100% 100%, 0 100%);
  background: conic-gradient(#b5b5b5 25%, transparent 0) 0 0 / 3px 3px;
`;
